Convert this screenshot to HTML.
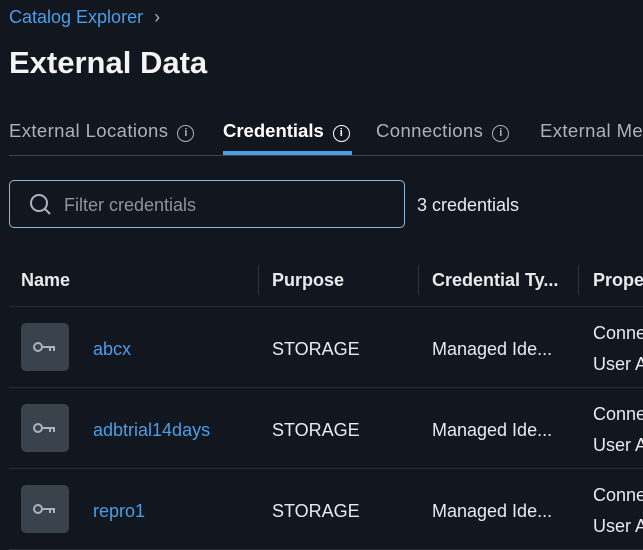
<!DOCTYPE html><html><head><style>
body{margin:0;width:643px;height:550px;background:#12161e;font-family:"Liberation Sans",sans-serif;color:#e8eaed;position:relative;overflow:hidden}
.a{position:absolute;white-space:nowrap}
.tab{font-size:18.5px;color:#a9b3bf;top:120px;letter-spacing:0.4px}
.info{display:inline-block;width:15px;height:15px;border:1.5px solid currentColor;border-radius:50%;font-size:11px;line-height:15px;text-align:center;font-weight:bold;vertical-align:1px;margin-left:9px;box-sizing:content-box;letter-spacing:0}
.h{font-size:18px;font-weight:bold;top:270px}
.sep{position:absolute;top:265px;width:1px;height:30px;background:#2a313b}
.line{position:absolute;left:9px;right:0;height:1px;background:#262c35}
.ic{position:absolute;left:21px;width:48px;height:48px;background:#3a424c;border-radius:5px}
.c{font-size:18px}
</style></head><body>
<div class="a" style="left:9px;top:7px;font-size:18px;color:#4a9ee8">Catalog Explorer <span style="color:#a9b3bf;margin-left:6px">›</span></div>
<div class="a" style="left:9px;top:45px;font-size:31px;font-weight:bold;color:#f2f4f6">External Data</div>
<div class="a tab" style="left:9px">External Locations<span class="info">i</span></div>
<div class="a tab" style="left:223px;color:#fff;font-weight:bold;letter-spacing:0">Credentials<span class="info">i</span></div>
<div class="a tab" style="left:376px">Connections<span class="info">i</span></div>
<div class="a tab" style="left:540px">External Me</div>
<div class="a" style="left:9px;right:0;top:155px;height:1px;background:#3a424c"></div>
<div class="a" style="left:223px;width:129px;top:151px;height:4px;background:#4a9ee8"></div>
<div class="a" style="left:9px;top:180px;width:394px;height:46px;border:1px solid #8cb8e0;border-radius:5px"></div>
<svg class="a" style="left:28px;top:193px" width="24" height="24" viewBox="0 0 24 24"><circle cx="11" cy="10" r="8" fill="none" stroke="#a9b3bf" stroke-width="2"/><path d="M17 16l5 5" stroke="#a9b3bf" stroke-width="2"/></svg>
<div class="a c" style="left:64px;top:195px;color:#8a95a1">Filter credentials</div>
<div class="a c" style="left:417px;top:195px">3 credentials</div>
<div class="a h" style="left:21px">Name</div>
<div class="a h" style="left:272px">Purpose</div>
<div class="a h" style="left:432px">Credential Ty...</div>
<div class="a h" style="left:593px">Prope</div>
<div class="sep" style="left:258px"></div><div class="sep" style="left:418px"></div><div class="sep" style="left:578px"></div>
<div class="line" style="top:306px"></div><div class="line" style="top:387px"></div><div class="line" style="top:468px"></div><div class="line" style="top:549px"></div>
<div class="ic" style="top:323px"></div><div class="ic" style="top:404px"></div><div class="ic" style="top:485px"></div>
<svg class="a" style="left:33px;top:341px" width="24" height="12"><circle cx="5" cy="6" r="4" fill="none" stroke="#a9b3bf" stroke-width="2"/><path d="M9 6h13M17 6v4M21 6v4" stroke="#a9b3bf" stroke-width="2"/></svg>
<svg class="a" style="left:33px;top:422px" width="24" height="12"><circle cx="5" cy="6" r="4" fill="none" stroke="#a9b3bf" stroke-width="2"/><path d="M9 6h13M17 6v4M21 6v4" stroke="#a9b3bf" stroke-width="2"/></svg>
<svg class="a" style="left:33px;top:503px" width="24" height="12"><circle cx="5" cy="6" r="4" fill="none" stroke="#a9b3bf" stroke-width="2"/><path d="M9 6h13M17 6v4M21 6v4" stroke="#a9b3bf" stroke-width="2"/></svg>
<div class="a c" style="left:93px;top:339px;color:#4a9ee8">abcx</div>
<div class="a c" style="left:93px;top:420px;color:#4a9ee8">adbtrial14days</div>
<div class="a c" style="left:93px;top:501px;color:#4a9ee8">repro1</div>
<div class="a c" style="left:272px;top:339px">STORAGE</div><div class="a c" style="left:272px;top:420px">STORAGE</div><div class="a c" style="left:272px;top:501px">STORAGE</div>
<div class="a c" style="left:432px;top:339px">Managed Ide...</div><div class="a c" style="left:432px;top:420px">Managed Ide...</div><div class="a c" style="left:432px;top:501px">Managed Ide...</div>
<div class="a c" style="left:593px;top:323px">Conne</div><div class="a c" style="left:593px;top:354px">User A</div>
<div class="a c" style="left:593px;top:404px">Conne</div><div class="a c" style="left:593px;top:435px">User A</div>
<div class="a c" style="left:593px;top:485px">Conne</div><div class="a c" style="left:593px;top:516px">User A</div>
</body></html>
